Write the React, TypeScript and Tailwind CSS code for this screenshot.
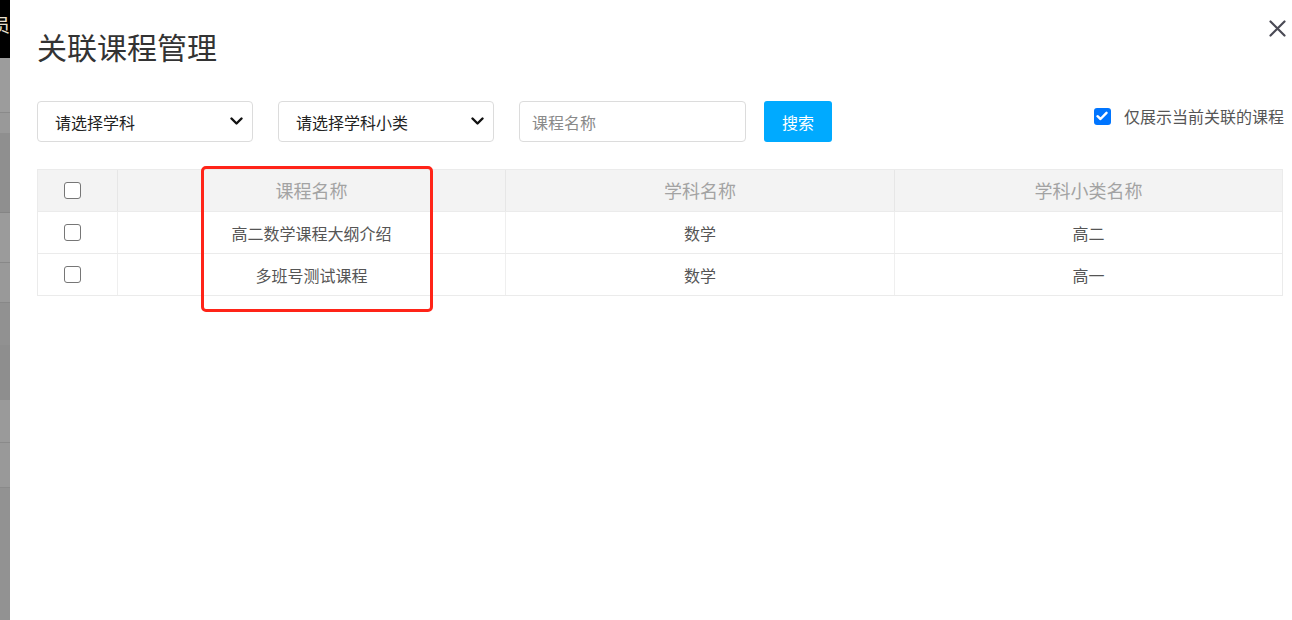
import React from "react";

const font = { fontFamily: '"Noto Sans CJK SC", "Noto Sans", sans-serif' };

function Chevron() {
  return (
    <svg width="13" height="9" viewBox="0 0 13 9" className="shrink-0">
      <path d="M1.5 1.5 L6.5 6.5 L11.5 1.5" fill="none" stroke="#111" strokeWidth="2.4" strokeLinecap="round" strokeLinejoin="round" />
    </svg>
  );
}

function Select({ label }: { label: string }) {
  return (
    <div className="w-[216px] h-[41px] border border-[#dcdcdc] rounded-[4px] flex items-center justify-between pl-[17px] pr-[9px] text-[16px] text-[#222] bg-white">
      <span>{label}</span>
      <Chevron />
    </div>
  );
}

function Box() {
  return <div className="w-[17px] h-[17px] border border-[#767676] rounded-[3px] bg-white" />;
}

const rows = [
  { name: "高二数学课程大纲介绍", subject: "数学", sub: "高二" },
  { name: "多班号测试课程", subject: "数学", sub: "高一" },
];

export default function App() {
  return (
    <div className="w-[1292px] h-[620px] flex overflow-hidden bg-white" style={font}>
      <div className="w-[10px] shrink-0 flex flex-col bg-[#969696]">
        <div className="h-[58px] bg-black overflow-hidden flex justify-end pt-[13px]">
          <span className="text-[18px] leading-[22px] text-[#e8e0d0] whitespace-nowrap">员</span>
        </div>
        <div className="h-[55px] bg-[#9c9c9c] border-b border-[#8a8a8a]" />
        <div className="h-[20px] bg-[#999999]" />
        <div className="h-[80px] bg-[#8f8f8f] border-b border-[#858585]" />
        <div className="h-[50px] bg-[#9b9b9b] border-b border-[#888]" />
        <div className="h-[40px] bg-[#999999] border-b border-[#888]" />
        <div className="h-[42px] bg-[#919191]" />
        <div className="h-[55px] bg-[#8e8e8e]" />
        <div className="h-[43px] bg-[#9a9a9a] border-b border-[#8a8a8a]" />
        <div className="h-[45px] bg-[#999999] border-b border-[#8a8a8a]" />
        <div className="flex-1 bg-[#929292]" />
      </div>
      <div className="flex-1 relative bg-white rounded-tl-[7px] pl-[27px] pr-[9px] flex flex-col">
        <button className="absolute top-[19px] right-[6px] w-[18px] h-[18px] flex items-center justify-center">
          <svg width="17" height="17" viewBox="0 0 17 17">
            <path d="M1.5 1.5 L15.5 15.5 M15.5 1.5 L1.5 15.5" stroke="#4a4a55" strokeWidth="2.2" strokeLinecap="round" />
          </svg>
        </button>
        <h1 className="mt-[28px] h-[36px] leading-[36px] text-[30px] font-normal text-[#333]">关联课程管理</h1>
        <div className="mt-[37px] flex items-start">
          <Select label="请选择学科" />
          <div className="ml-[25px]">
            <Select label="请选择学科小类" />
          </div>
          <div className="ml-[25px] w-[227px] h-[41px] border border-[#dcdcdc] rounded-[4px] flex items-center pl-[12px] text-[16px] text-[#8a8a8a]">
            课程名称
          </div>
          <button className="ml-[18px] w-[68px] h-[41px] rounded-[3px] bg-[#00aaff] text-white text-[16px] flex items-center justify-center">
            搜索
          </button>
          <div className="ml-auto mt-[4px] flex items-center h-[22px]">
            <div className="w-[17px] h-[17px] rounded-[3px] bg-[#0075ff] flex items-center justify-center">
              <svg width="12" height="10" viewBox="0 0 12 10">
                <path d="M1.5 5.2 L4.5 8 L10.5 1.8" fill="none" stroke="#fff" strokeWidth="2.4" strokeLinecap="round" strokeLinejoin="round" />
              </svg>
            </div>
            <span className="ml-[13px] mr-[-1px] text-[16px] text-[#555]">仅展示当前关联的课程</span>
          </div>
        </div>
        <div className="mt-[27px] border border-[#ebebeb]">
          <div className="grid grid-cols-[79px_388px_389px_1fr] h-[41px] bg-[#f3f3f3] text-[18px] text-[#a3a3a3]">
            <div className="flex items-center pl-[26px]"><Box /></div>
            <div className="border-l border-[#e6e6e6] flex items-center justify-center">课程名称</div>
            <div className="border-l border-[#e6e6e6] flex items-center justify-center">学科名称</div>
            <div className="border-l border-[#e6e6e6] flex items-center justify-center">学科小类名称</div>
          </div>
          {rows.map((r) => (
            <div key={r.name} className="grid grid-cols-[79px_388px_389px_1fr] h-[42px] border-t border-[#ebebeb] text-[16px] text-[#555]">
              <div className="flex items-center pl-[26px]"><Box /></div>
              <div className="border-l border-[#efefef] flex items-center justify-center">{r.name}</div>
              <div className="border-l border-[#efefef] flex items-center justify-center">{r.subject}</div>
              <div className="border-l border-[#efefef] flex items-center justify-center">{r.sub}</div>
            </div>
          ))}
        </div>
        <div className="absolute left-[191px] top-[166px] w-[232px] h-[146px] border-[3px] border-[#ff2418] rounded-[5px] pointer-events-none" />
      </div>
    </div>
  );
}
